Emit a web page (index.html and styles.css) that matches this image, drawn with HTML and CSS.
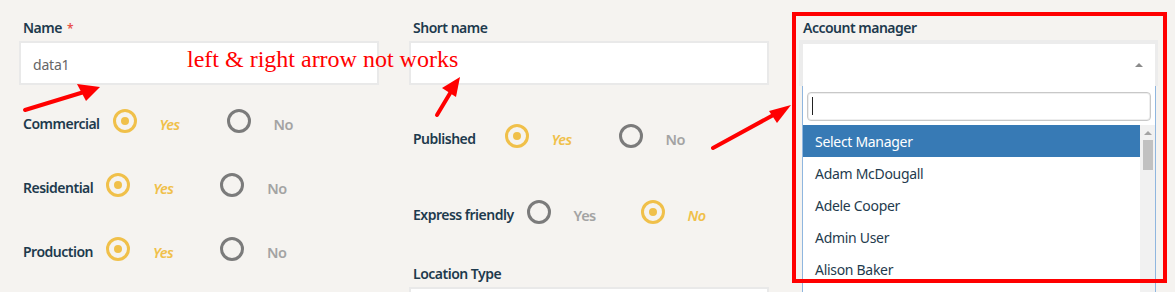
FILE: index.html
```html
<!DOCTYPE html>
<html>
<head>
<meta charset="utf-8">
<link rel="stylesheet" href="styles.css">
</head>
<body>
<div class="page">
  <div class="form">
    <div class="col">
      <div class="field-label">Name <span class="req">*</span></div>
      <div class="text-input"><span class="value">data1</span></div>

      <div class="radio-row first">
        <span class="row-label">Commercial</span>
        <span class="radio on"></span><span class="opt on">Yes</span>
        <span class="radio"></span><span class="opt">No</span>
      </div>
      <div class="radio-row">
        <span class="row-label">Residential</span>
        <span class="radio on"></span><span class="opt on">Yes</span>
        <span class="radio"></span><span class="opt">No</span>
      </div>
      <div class="radio-row">
        <span class="row-label">Production</span>
        <span class="radio on"></span><span class="opt on">Yes</span>
        <span class="radio"></span><span class="opt">No</span>
      </div>
    </div>

    <div class="col">
      <div class="field-label">Short name</div>
      <div class="text-input"></div>

      <div class="radio-row published">
        <span class="row-label wide">Published</span>
        <span class="radio on"></span><span class="opt on">Yes</span>
        <span class="radio"></span><span class="opt">No</span>
      </div>
      <div class="radio-row express">
        <span class="row-label">Express friendly</span>
        <span class="radio"></span><span class="opt">Yes</span>
        <span class="radio on"></span><span class="opt on">No</span>
      </div>

      <div class="field-label location">Location Type</div>
      <div class="text-input"></div>
    </div>

    <div class="col">
      <div class="field-label">Account manager</div>
      <div class="select-wrap">
        <div class="select-box"><span class="caret-up"></span></div>
      </div>
      <div class="dropdown">
        <div class="search"><span class="cursor"></span></div>
        <div class="results">
          <ul class="options">
            <li class="highlight">Select Manager</li>
            <li>Adam McDougall</li>
            <li>Adele Cooper</li>
            <li>Admin User</li>
            <li>Alison Baker</li>
          </ul>
          <div class="scrollbar">
            <span class="sb-up"></span>
            <span class="sb-thumb"></span>
          </div>
        </div>
      </div>
    </div>
  </div>

  <div class="note">left &amp; right arrow not works</div>
  <svg class="marks" width="1175" height="292" viewBox="0 0 1175 292">
    <rect x="794" y="14" width="371" height="267" fill="none" stroke="#ff0000" stroke-width="4"/>
    <line x1="25" y1="110" x2="84" y2="92" stroke="#ff0000" stroke-width="4" stroke-linecap="round"/>
    <polygon points="100,87 77,84 86,101" fill="#ff0000"/>
    <line x1="437" y1="115" x2="452" y2="90" stroke="#ff0000" stroke-width="4" stroke-linecap="round"/>
    <polygon points="460,77 442,88 456,97" fill="#ff0000"/>
    <line x1="713" y1="148" x2="777" y2="113" stroke="#ff0000" stroke-width="4" stroke-linecap="round"/>
    <polygon points="791,105 769,111 777,123" fill="#ff0000"/>
  </svg>
</div>
</body>
</html>
```

FILE: styles.css
```css
* { box-sizing: border-box; }

html, body {
  margin: 0;
  padding: 0;
  background: #f5f3f0;
}

.page {
  position: relative;
  width: 1175px;
  height: 292px;
  overflow: hidden;
  font-family: "Noto Sans", "DejaVu Sans", sans-serif;
  color: #1d3a4d;
}

.form {
  display: grid;
  grid-template-columns: 360px 360px 359px;
  column-gap: 30px;
  padding: 18px 0 0 19px;
}

.field-label {
  height: 20px;
  line-height: 20px;
  padding-left: 4px;
  font-size: 14px;
  font-weight: 600;
  letter-spacing: -0.5px;
  margin-bottom: 3px;
  white-space: nowrap;
}

.req {
  color: #e8524a;
  font-size: 12px;
  margin-left: 2px;
}

.text-input {
  height: 44px;
  background: #ffffff;
  border: 2px solid #e9e9e9;
  display: flex;
  align-items: center;
  padding-left: 12px;
}

.value {
  font-size: 14px;
  color: #666666;
  letter-spacing: -0.2px;
  padding-top: 3px;
}

.radio-row {
  display: flex;
  align-items: center;
  height: 30px;
  margin-top: 34px;
  padding-left: 4px;
  font-size: 14px;
  letter-spacing: -0.5px;
}

.radio-row.first { margin-top: 21px; }
.radio-row.published { margin-top: 36px; }
.radio-row.express { margin-top: 46px; }

.row-label {
  font-weight: 600;
  margin-right: 13px;
  padding-top: 5px;
  white-space: nowrap;
}

.row-label.wide { margin-right: 29px; }

.radio {
  width: 24px;
  height: 24px;
  border: 3px solid #7b7b7b;
  border-radius: 50%;
  flex: none;
  display: flex;
  align-items: center;
  justify-content: center;
}

.radio.on { border-color: #f0c04a; }

.radio.on::after {
  content: "";
  width: 8px;
  height: 8px;
  border-radius: 50%;
  background: #f0c04a;
}

.opt {
  margin-left: 23px;
  width: 44px;
  margin-right: 23px;
  padding-top: 5px;
  font-size: 14.5px;
  font-weight: 600;
  color: #a3a3a3;
}

.opt.on {
  color: #f0c04a;
  font-style: italic;
}

.field-label.location { margin-top: 37px; }

/* select2-like account manager */
.select-wrap {
  margin-top: -1px;
  background: #ececec;
  padding: 4px 3px 0 4px;
  height: 46px;
}

.select-box {
  height: 42px;
  background: #ffffff;
  position: relative;
}

.caret-up {
  position: absolute;
  right: 12px;
  top: 19px;
  width: 0;
  height: 0;
  border-left: 4px solid transparent;
  border-right: 4px solid transparent;
  border-bottom: 4px solid #8a8a8a;
}

.dropdown {
  margin-left: 3px;
  width: 354px;
  background: #ffffff;
  border: 1px solid #8fb6df;
  border-top: none;
  padding-top: 6px;
  height: 220px;
}

.search {
  margin: 0 4px 4px 4px;
  height: 29px;
  border: 1px solid #c8c8c8;
  border-radius: 4px;
  background: #ffffff;
  padding: 4px 0 0 4px;
  box-shadow: inset 0 0 0 1px #eeeeee;
}

.cursor {
  display: block;
  width: 1px;
  height: 18px;
  background: #222222;
}

.results {
  display: flex;
  height: 180px;
}

.options {
  list-style: none;
  margin: 0;
  padding: 0;
  flex: 1;
  font-size: 14px;
  letter-spacing: -0.3px;
  color: #1f3b4e;
}

.options li {
  height: 32px;
  line-height: 34px;
  padding-left: 12px;
  white-space: nowrap;
}

.options li.highlight {
  background: #377ab5;
  color: #ffffff;
}

.scrollbar {
  width: 15px;
  flex: none;
  background: #f1f1f1;
  display: flex;
  flex-direction: column;
  align-items: center;
  padding-top: 6px;
}

.sb-up {
  width: 0;
  height: 0;
  border-left: 4px solid transparent;
  border-right: 4px solid transparent;
  border-bottom: 4px solid #a3a3a3;
}

.sb-thumb {
  margin-top: 5px;
  width: 10px;
  height: 30px;
  background: #c1c1c1;
}

/* annotation overlay */
.note {
  position: absolute;
  left: 187px;
  top: 47px;
  font-family: "Liberation Serif", "Times New Roman", serif;
  font-size: 24px;
  line-height: 24px;
  color: #ff0000;
  white-space: nowrap;
}

.marks {
  position: absolute;
  left: 0;
  top: 0;
  pointer-events: none;
}
```
